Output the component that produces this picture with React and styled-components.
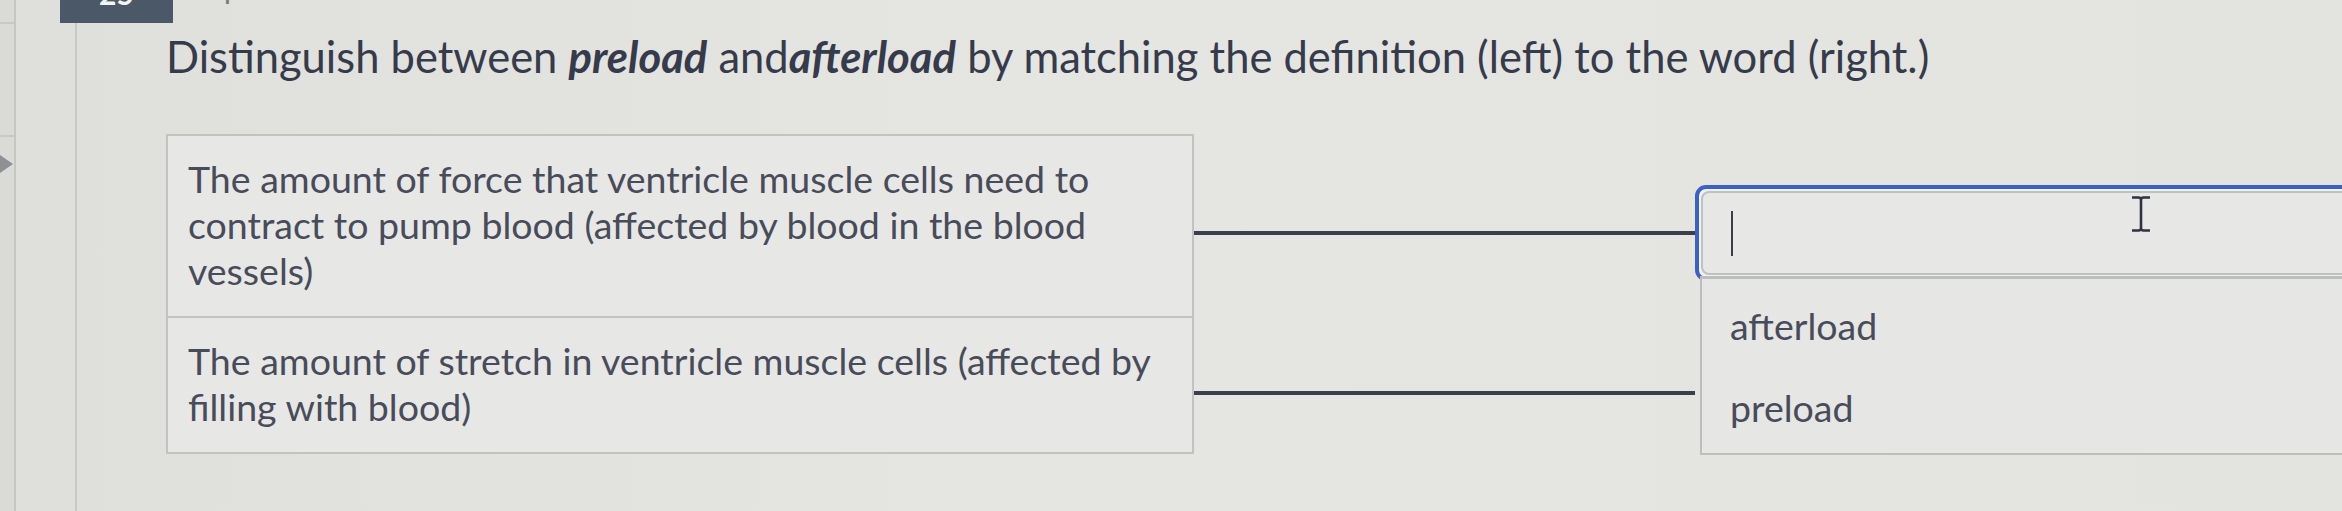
import React from "react";
import styled, { createGlobalStyle } from "styled-components";

const GlobalStyle = createGlobalStyle`
  html, body {
    margin: 0;
    padding: 0;
    background: #e3e3e0;
  }
  body {
    font-family: Lato, "Open Sans", sans-serif;
  }
`;

// each definition keeps the line breaks seen in the question
const definitions = [
  [
    "The amount of force that ventricle muscle cells need to",
    "contract to pump blood (affected by blood in the blood",
    "vessels)",
  ],
  ["The amount of stretch in ventricle muscle cells (affected by", "filling with blood)"],
];

const options = ["afterload", "preload"];

const App = () => {
  return (
    <>
      <GlobalStyle />
      <Page>
        <Edge>
          <EdgeRule $top={22} />
          <EdgeRule $top={111} />
          <EdgeArrow />
        </Edge>
        <Column>
          <TopBar>
            <Badge>
              <BadgeLabel>25</BadgeLabel>
            </Badge>
            <Points>2 pts</Points>
          </TopBar>
          <Body>
            <Gutter />
            <Main>
              <Heading>
                Distinguish between <em>preload</em> and<em>afterload</em> by matching the
                definition (left) to the word (right.)
              </Heading>
              <Matching>
                <Definition $first>
                  {definitions[0].map((l) => (
                    <Line key={l}>{l}</Line>
                  ))}
                </Definition>
                <ConnectorCell>
                  <Connector />
                </ConnectorCell>
                <SelectCell>
                  <SelectWrap>
                    <FocusRing>
                      <InputBox>
                        <Caret />
                      </InputBox>
                    </FocusRing>
                    <IBeam width="24" height="38" viewBox="0 0 24 38">
                      <path
                        d="M3 2.5 H9.5 Q12 2.5 12 5 V33 Q12 35.5 9.5 35.5 H3 M21 2.5 H14.5 Q12 2.5 12 5 M12 33 Q12 35.5 14.5 35.5 H21"
                        fill="none"
                        stroke="#2f3340"
                        strokeWidth="2.6"
                      />
                    </IBeam>
                    <Listbox>
                      {options.map((o) => (
                        <Option key={o}>{o}</Option>
                      ))}
                    </Listbox>
                  </SelectWrap>
                </SelectCell>

                <Definition>
                  {definitions[1].map((l) => (
                    <Line key={l}>{l}</Line>
                  ))}
                </Definition>
                <ConnectorCell>
                  <Connector $long />
                </ConnectorCell>
                <SelectCell />
              </Matching>
            </Main>
          </Body>
        </Column>
      </Page>
    </>
  );
};

const Page = styled.div`
  display: flex;
  width: 2342px;
  height: 511px;
  overflow: hidden;
  background: linear-gradient(90deg, #dfdfdc 0%, #e5e5e2 45%, #e3e3e0 100%);
`;

const Edge = styled.div`
  width: 14px;
  flex-shrink: 0;
  background: #dadad7;
  border-right: 2px solid #c6c6c3;
  display: flex;
  flex-direction: column;
`;

const EdgeRule = styled.div`
  height: 2px;
  margin-top: ${(p) => p.$top}px;
  background: #c9c9c6;
`;

const EdgeArrow = styled.div`
  margin-top: 18px;
  width: 0;
  height: 0;
  border-top: 9px solid transparent;
  border-bottom: 9px solid transparent;
  border-left: 13px solid #8e9096;
`;

const Column = styled.div`
  flex: 1;
  display: flex;
  flex-direction: column;
`;

const TopBar = styled.div`
  height: 23px;
  display: flex;
  align-items: flex-start;
  gap: 24px;
  padding-left: 44px;
`;

const Badge = styled.div`
  width: 113px;
  height: 23px;
  background: #4b5867;
  overflow: hidden;
  display: flex;
  justify-content: center;
`;

const BadgeLabel = styled.span`
  margin-top: -22px;
  font-size: 30px;
  line-height: 30px;
  font-weight: 700;
  color: #f4f4f4;
`;

const Points = styled.span`
  margin-top: -30px;
  font-size: 32px;
  line-height: 32px;
  color: #7a7d85;
`;

const Body = styled.div`
  flex: 1;
  display: flex;
`;

const Gutter = styled.div`
  width: 59px;
  flex-shrink: 0;
  border-right: 2px solid #c8c8c5;
`;

const Main = styled.div`
  flex: 1;
  padding: 8px 0 0 89px;
`;

const Heading = styled.h2`
  margin: 0;
  font-size: 43.5px;
  line-height: 50px;
  font-weight: 400;
  color: #363b4b;
  white-space: nowrap;

  em {
    font-weight: 700;
    font-style: italic;
  }
`;

const Matching = styled.div`
  margin-top: 53px;
  display: grid;
  grid-template-columns: 1028px 501px 700px;
`;

const Definition = styled.div`
  box-sizing: border-box;
  padding: 20px 20px 22px 20px;
  background: #e7e7e5;
  border: 2px solid #c1c2c2;
  border-top-width: ${(p) => (p.$first ? "2px" : "0")};
  font-size: 37.5px;
  line-height: 46px;
  color: #484c5a;
`;

const Line = styled.span`
  display: block;
  white-space: nowrap;
`;

const ConnectorCell = styled.div`
  display: flex;
  align-items: center;
  padding-top: 14px;
`;

const Connector = styled.div`
  width: ${(p) => (p.$long ? "506px" : "100%")};
  height: 4px;
  background: #3b3f4b;
`;

const SelectCell = styled.div`
  display: flex;
  align-items: center;
  padding-top: 14px;
`;

const SelectWrap = styled.div`
  position: relative;
  width: 700px;
`;

const FocusRing = styled.div`
  box-sizing: border-box;
  height: 96px;
  padding: 2px;
  border: 4px solid #3a62c4;
  border-radius: 11px;
  background: #f1f1ef;
`;

const InputBox = styled.div`
  box-sizing: border-box;
  height: 100%;
  padding-left: 28px;
  display: flex;
  align-items: center;
  border: 2px solid #bfc0c0;
  border-radius: 8px;
  background: #e7e7e5;
`;

const Caret = styled.div`
  width: 2px;
  height: 45px;
  background: #3a3c4a;
`;

const IBeam = styled.svg`
  position: absolute;
  left: 434px;
  top: 10px;
`;

const Listbox = styled.div`
  position: absolute;
  left: 5px;
  right: -20px;
  top: 91px;
  box-sizing: border-box;
  padding: 6px 0 4px;
  background: #e6e6e4;
  border: 2px solid #bdbebe;
  border-top-width: 3px;
`;

const Option = styled.div`
  height: 82px;
  padding-left: 28px;
  font-size: 37.5px;
  line-height: 82px;
  color: #484c5a;
`;

export default App;
